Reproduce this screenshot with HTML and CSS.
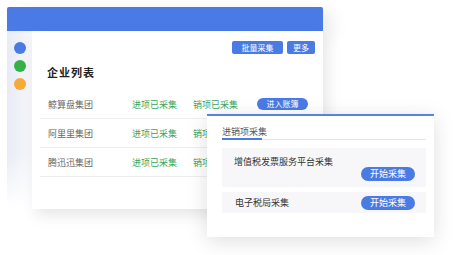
FILE: index.html
```html
<!DOCTYPE html>
<html lang="zh-CN">
<head>
    <meta charset="UTF-8">
    <meta name="viewport" content="width=device-width, initial-scale=1.0">
    <title>企业列表</title>
    <link rel="stylesheet" href="styles.css">
</head>
<body>
    <div class="stage">
        <div class="win">
            <div class="winHeader"></div>
            <div class="winBody">
                <div class="sidebar">
                    <span class="dot blue"></span>
                    <span class="dot green"></span>
                    <span class="dot orange"></span>
                </div>
                <div class="panel">
                    <div class="toolbar">
                        <button class="btn wide">批量采集</button>
                        <button class="btn">更多</button>
                    </div>
                    <h1 class="title">企业列表</h1>
                    <div class="list">
                        <div class="row">
                            <span class="name">鲸算盘集团</span>
                            <span class="state">进项已采集</span>
                            <span class="state">销项已采集</span>
                            <button class="pill">进入账簿</button>
                        </div>
                        <div class="row">
                            <span class="name">阿里里集团</span>
                            <span class="state">进项已采集</span>
                            <span class="state">销项已采集</span>
                        </div>
                        <div class="row">
                            <span class="name">腾迅迅集团</span>
                            <span class="state">进项已采集</span>
                            <span class="state">销项已采集</span>
                        </div>
                    </div>
                </div>
            </div>
        </div>

        <div class="popup">
            <div class="tabs">
                <span class="tab">进销项采集</span>
            </div>
            <div class="card tall">
                <span class="cardText">增值税发票服务平台采集</span>
                <button class="pill start">开始采集</button>
            </div>
            <div class="card">
                <span class="cardText">电子税局采集</span>
                <button class="pill start">开始采集</button>
            </div>
        </div>
    </div>
</body>
</html>
```

FILE: styles.css
```css
body {
    margin: 0;
    background: #ffffff;
    font-family: "Noto Sans CJK SC", "Noto Sans", sans-serif;
}
.stage {
    position: relative;
    width: 474px;
    height: 255px;
    overflow: hidden;
}
.win {
    margin: 7px 0 0 7px;
    width: 316px;
}
.winHeader {
    height: 24px;
    background: #4a7be5;
    border-radius: 2px 2px 0 0;
    box-shadow: 8px 6px 18px rgba(0, 0, 0, 0.10);
}
.winBody {
    display: flex;
    align-items: flex-start;
}
.sidebar {
    width: 25px;
    height: 176px;
    display: flex;
    flex-direction: column;
    align-items: center;
    gap: 6px;
    padding-top: 11px;
    box-sizing: border-box;
    background: linear-gradient(to bottom, rgba(255,255,255,0) 70%, #ffffff 100%),
                linear-gradient(to right, #e8ebf6, #f7f8fc);
}
.dot {
    width: 12px;
    height: 12px;
    border-radius: 50%;
}
.dot.blue { background: #4a7be5; }
.dot.green { background: #35b14a; }
.dot.orange { background: #f6aa38; }
.panel {
    width: 291px;
    height: 178px;
    background: #ffffff;
    box-shadow: 4px 6px 14px rgba(0, 0, 0, 0.10);
    padding: 10px 8px 0 8px;
    box-sizing: border-box;
}
.toolbar {
    display: flex;
    justify-content: flex-end;
    gap: 4px;
}
.btn {
    height: 13px;
    width: 28px;
    padding: 0;
    border: none;
    border-radius: 2px;
    background: #4a7be5;
    color: #ffffff;
    font-family: inherit;
    font-size: 8px;
    line-height: 13px;
}
.btn.wide {
    width: 51px;
}
.title {
    margin: 11px 0 0 7px;
    font-size: 11px;
    font-weight: bold;
    letter-spacing: 1px;
    line-height: 14px;
    color: #222222;
}
.list {
    margin-top: 11px;
}
.row {
    display: flex;
    align-items: center;
    height: 28px;
    padding-left: 8px;
    border-bottom: 1px solid #eeeeee;
    font-size: 9px;
}
.name {
    width: 84px;
    color: #666666;
}
.state {
    width: 61px;
    color: #3aa45b;
}
.state + .state {
    width: 64px;
}
.pill {
    height: 12px;
    width: 51px;
    padding: 0;
    border: none;
    border-radius: 6px;
    background: #4a7be5;
    color: #ffffff;
    font-family: inherit;
    font-size: 8px;
    line-height: 12px;
}
.popup {
    position: absolute;
    left: 207px;
    top: 114px;
    width: 227px;
    height: 123px;
    box-sizing: border-box;
    background: #ffffff;
    border-top: 2px solid #5683e2;
    box-shadow: 0 4px 20px rgba(0, 0, 0, 0.13);
    padding: 10px 8px 0 15px;
}
.tabs {
    display: flex;
    border-bottom: 1px solid #e6e6e6;
    margin-bottom: 8px;
}
.tab {
    width: 40px;
    font-size: 9px;
    line-height: 11px;
    padding-bottom: 1px;
    color: #555555;
    border-bottom: 2px solid #4a7be5;
    margin-bottom: -1px;
    white-space: nowrap;
}
.card {
    width: 204px;
    height: 21px;
    box-sizing: border-box;
    background: #f7f7f9;
    display: flex;
    align-items: center;
    justify-content: space-between;
    padding: 0 11px 0 13px;
    margin-bottom: 5px;
}
.card.tall {
    height: 39px;
    flex-direction: column;
    align-items: stretch;
    justify-content: flex-start;
    padding: 9px 11px 0 12px;
}
.cardText {
    font-size: 9px;
    line-height: 10px;
    color: #333333;
}
.pill.start {
    width: 54px;
    height: 14px;
    border-radius: 7px;
    font-size: 9px;
    line-height: 14px;
}
.card.tall .pill.start {
    align-self: flex-end;
}
```
